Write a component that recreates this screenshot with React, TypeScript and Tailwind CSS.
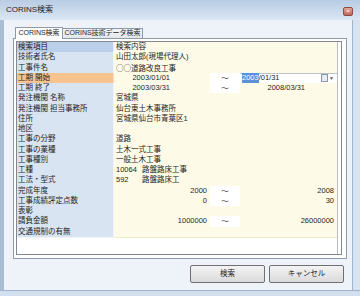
import React from "react";

type Row = {
  label: string;
  value?: string;
  range?: [string, string];
  date?: boolean;
  picker?: boolean;
  selected?: boolean;
  header?: boolean;
};

const rows: Row[] = [
  { label: "検索項目", value: "検索内容", header: true },
  { label: "技術者氏名", value: "山田太郎(現場代理人)" },
  { label: "工事件名", value: "○○道路改良工事" },
  { label: "工期 開始", range: ["2003/01/01", "2003/01/31"], date: true, picker: true, selected: true },
  { label: "工期 終了", range: ["2003/03/31", "2008/03/31"], date: true },
  { label: "発注機関 名称", value: "宮城県" },
  { label: "発注機関 担当事務所", value: "仙台東土木事務所" },
  { label: "住所", value: "宮城県仙台市青葉区1" },
  { label: "地区" },
  { label: "工事の分野", value: "道路" },
  { label: "工事の業種", value: "土木一式工事" },
  { label: "工事種別", value: "一般土木工事" },
  { label: "工種", value: "10064|路盤路床工事" },
  { label: "工法・型式", value: "592|路盤路床工" },
  { label: "完成年度", range: ["2000", "2008"] },
  { label: "工事成績評定点数", range: ["0", "30"] },
  { label: "表彰" },
  { label: "請負金額", range: ["1000000", "26000000"] },
  { label: "交通規制の有無" },
];

const font = { fontFamily: '"Liberation Sans","Noto Sans CJK JP",sans-serif' };
const cjk = { fontFamily: '"Noto Sans CJK JP",sans-serif' };

function Value({ row }: { row: Row }) {
  if (row.range) {
    const [a, b] = row.range;
    return (
      <div className="flex h-full">
        <div className={`w-[96px] text-right ${row.date ? "pr-[40px]" : "pr-[3px]"}`}>{a}</div>
        <div className="w-[30px] bg-white text-center" style={cjk}>～</div>
        {row.picker ? (
          <div className="flex-1 flex items-center bg-white border-t border-[#b9c3cf] pl-[2px]">
            <span className="bg-[#5b8fd6] text-white">{b.slice(0, 4)}</span>
            <span>{b.slice(4)}</span>
            <span className="ml-auto flex items-center gap-[1px] pr-[3px]">
              <span className="w-[7px] h-[8px] border border-[#8a96a6] bg-[#e7ecf2]" />
              <span className="text-[5px] text-[#555]">▼</span>
            </span>
          </div>
        ) : (
          <div className={`flex-1 text-right ${row.date ? "pr-[32px]" : "pr-[3px]"}`}>{b}</div>
        )}
      </div>
    );
  }
  if (row.value && row.value.includes("|")) {
    const [code, name] = row.value.split("|");
    return (
      <div className="flex pl-[2px]">
        <span className="w-[26px]">{code}</span>
        <span>{name}</span>
      </div>
    );
  }
  if (row.value && row.value.startsWith("○")) {
    return (
      <div className="pl-[2px]" style={cjk}>
        {row.value}
      </div>
    );
  }
  return <div className="pl-[2px]">{row.value}</div>;
}

export default function App() {
  return (
    <div
      className="w-[360px] h-[296px] overflow-hidden bg-[#d7e3f1] flex flex-col text-[7.5px] text-[#1e1e1e]"
      style={font}
    >
      {/* title bar */}
      <div className="h-[20px] shrink-0 flex items-center justify-between pl-[6px] pr-[7px] bg-gradient-to-b from-[#b8cce4] to-[#dbe6f3]">
        <span className="text-[8px] text-[#222]">CORINS検索</span>
        <span className="w-[10px] h-[9px] mt-[2px] rounded-[2px] border border-[#8c4b45] bg-gradient-to-b from-[#e4a79c] to-[#c0635a] flex items-center justify-center text-[6px] leading-none text-white">
          ×
        </span>
      </div>

      <div className="flex-1 flex border-l-[4px] border-[#a9bdd4]">
        {/* client area */}
        <div className="w-[348px] h-[270px] bg-[#eef3f9] pl-[9px] pt-[7px] flex flex-col">
          {/* tabs */}
          <div className="flex items-end h-[11px] pl-[2px] whitespace-nowrap text-[7px]">
            <div className="w-[48px] h-[12px] bg-white border border-b-0 border-[#8d9aab] flex items-center justify-center relative top-[1px]">
              CORINS検索
            </div>
            <div className="w-[80px] h-[10px] bg-gradient-to-b from-[#f2f4f7] to-[#e3e7ec] border border-b-0 border-l-0 border-[#8d9aab] flex items-center justify-center">
              CORINS技術データ検索
            </div>
          </div>

          {/* tab panel */}
          <div className="w-[334px] h-[221px] border border-[#8d9aab] bg-white p-[2px]">
            <div className="w-[326px] h-[214px] border border-[#828790] bg-white flex">
              <div className="w-[321px]">
                {rows.map((r, i) => (
                  <div key={i} className="grid grid-cols-[97px_1fr] h-[10.25px] leading-[10.25px] whitespace-nowrap">
                    <div
                      className={`pl-[1px] border-r border-b ${
                        r.selected
                          ? "bg-[#f6c38e] border-[#f8dcc0]"
                          : r.header
                          ? "bg-[#bccfe8] border-[#e4ecf6]"
                          : "bg-[#d9e4f2] border-[#f1f5fb]"
                      }`}
                    >
                      {r.label}
                    </div>
                    <div className="bg-[#fdfbe7] border-b border-[#efebcf] overflow-hidden">
                      <Value row={r} />
                    </div>
                  </div>
                ))}
              </div>
              <div className="w-[4px] border-l border-[#b8bcc2] bg-white" />
            </div>
          </div>

          {/* buttons */}
          <div className="flex justify-end gap-[4px] pr-[8px] mt-[6px]">
            <button className="w-[75px] h-[18px] rounded-[2px] border border-[#707070] bg-gradient-to-b from-[#f4f4f4] to-[#dadada] text-[7.5px]">
              検索
            </button>
            <button className="w-[75px] h-[18px] rounded-[2px] border border-[#707070] bg-gradient-to-b from-[#f4f4f4] to-[#dadada] text-[7.5px]">
              キャンセル
            </button>
          </div>
        </div>
        {/* right frame */}
        <div className="flex-1 border-l border-[#9fb3cb] bg-[#d7e3f1]" />
      </div>
      <div className="h-[6px] shrink-0 border-t border-[#9fb3cb] bg-[#d2dfee]" />
    </div>
  );
}
